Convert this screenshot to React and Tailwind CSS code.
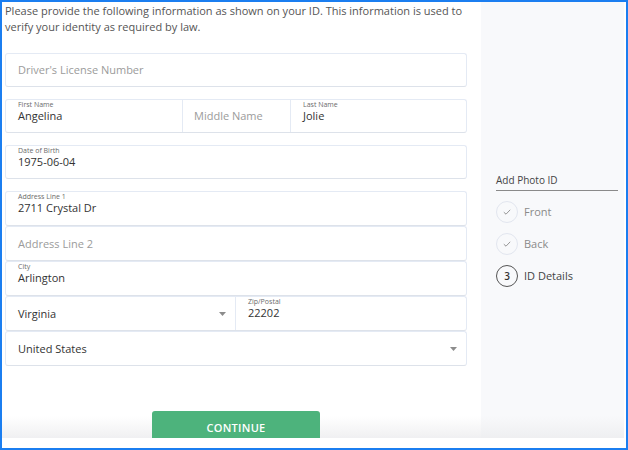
import React from "react";

const font = { fontFamily: '"Open Sans", "Liberation Sans", sans-serif' };

function Field({ label, value, placeholder, className = "", caret = false }) {
  return (
    <div
      className={
        "relative flex h-full flex-col px-[12px] " + (label ? "justify-start pt-[1px] " : "justify-center ") + className
      }
    >
      {label ? (
        <>
          <div className="text-[7px] leading-[8px] text-[#6b6b6b]">{label}</div>
          <div className="text-[11px] leading-[14px] text-[#333]">{value}</div>
        </>
      ) : value ? (
        <div className="text-[11px] leading-[14px] text-[#333]">{value}</div>
      ) : (
        <div className="text-[11px] leading-[14px] text-[#9b9b9b]">{placeholder}</div>
      )}
      {caret && (
        <svg className="absolute right-[9px] top-1/2 -translate-y-1/2" width="7" height="4" viewBox="0 0 7 4">
          <path d="M0 0 L7 0 L3.5 4 Z" fill="#8c8c8c" />
        </svg>
      )}
    </div>
  );
}

function Box({ children, className = "" }) {
  return (
    <div
      className={
        "flex w-full overflow-hidden rounded-[3px] border border-[#e4eaf4] border-b-[#dde2ea] bg-white " + className
      }
    >
      {children}
    </div>
  );
}

function Step({ done, n, label }) {
  return (
    <div className="flex h-[22px] items-center gap-[6px]">
      {done ? (
        <div className="flex h-[22px] w-[22px] items-center justify-center rounded-full border border-[#e2e6ef] bg-[#f8f9fb]">
          <svg width="8" height="6" viewBox="0 0 8 6">
            <path d="M0.8 3.2 L3 5.2 L7.2 0.8" fill="none" stroke="#8a8a8a" strokeWidth="0.9" />
          </svg>
        </div>
      ) : (
        <div className="flex h-[22px] w-[22px] items-center justify-center rounded-full border border-[#555] text-[10px] font-semibold text-[#333]">
          {n}
        </div>
      )}
      <div className={"text-[11px] " + (done ? "text-[#8a8a8a]" : "text-[#444]")}>{label}</div>
    </div>
  );
}

export default function App() {
  return (
    <div className="h-[450px] w-[628px] border-2 border-[#1b7ef0] bg-white pb-[10px] pr-[2px]" style={font}>
      <div className="relative flex h-full overflow-hidden">
        <div className="pointer-events-none absolute bottom-0 left-0 right-0 h-[22px] bg-gradient-to-b from-[rgba(240,240,240,0)] to-[rgba(236,236,238,0.8)]" />
        <div className="relative w-[479px] shrink-0 pl-[3px]">
          <p className="pt-[1px] text-[11px] leading-[16px] text-[#555]">
            Please provide the following information as shown on your ID. This information is used to verify your identity as required by law.
          </p>
          <div className="mt-[18px] flex w-[462px] flex-col">
            <Box className="h-[34px]">
              <Field placeholder="Driver's License Number" />
            </Box>
            <Box className="mt-[12px] h-[34px]">
              <Field className="w-[177px] border-r border-[#e4eaf4]" label="First Name" value="Angelina" />
              <Field className="w-[108px] border-r border-[#e4eaf4] !px-[11px]" placeholder="Middle Name" />
              <Field className="flex-1" label="Last Name" value="Jolie" />
            </Box>
            <Box className="mt-[12px] h-[34px]">
              <Field label="Date of Birth" value="1975-06-04" />
            </Box>
            <Box className="mt-[12px] h-[35px]">
              <Field label="Address Line 1" value="2711 Crystal Dr" />
            </Box>
            <Box className="h-[35px]">
              <Field placeholder="Address Line 2" />
            </Box>
            <Box className="h-[35px]">
              <Field label="City" value="Arlington" />
            </Box>
            <Box className="h-[35px]">
              <Field className="w-[230px] border-r border-[#e4eaf4]" value="Virginia" caret />
              <Field className="flex-1" label="Zip/Postal" value="22202" />
            </Box>
            <Box className="h-[35px]">
              <Field className="flex-1" value="United States" caret />
            </Box>
            <div className="mt-[45px] flex justify-center">
              <button className="relative z-10 h-[34px] w-[168px] rounded-[3px] bg-[#4db37c] text-[11px] font-semibold tracking-[0.3px] text-white">
                CONTINUE
              </button>
            </div>
          </div>
        </div>
        <div className="flex-1 bg-[#f8f9fb] pl-[15px] pr-[6px] pt-[171px]">
          <div className="border-b border-[#8a8a8a] pb-[3px] text-[10px] leading-[14px] text-[#444]">Add Photo ID</div>
          <div className="mt-[10px] flex flex-col gap-[10px]">
            <Step done label="Front" />
            <Step done label="Back" />
            <Step n="3" label="ID Details" />
          </div>
        </div>
      </div>
    </div>
  );
}
